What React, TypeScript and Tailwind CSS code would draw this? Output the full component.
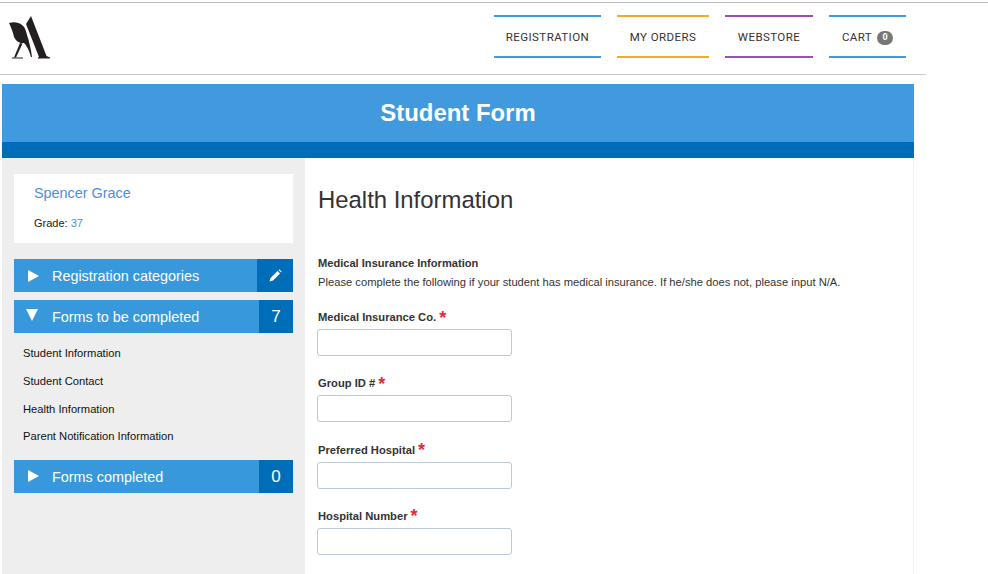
const nav = [
  { label: "REGISTRATION", w: "w-[107px]", c: "border-[#429ade]" },
  { label: "MY ORDERS", w: "w-[92px]", c: "border-[#f5a733]" },
  { label: "WEBSTORE", w: "w-[88px]", c: "border-[#9b4fb0]" },
];

const forms = ["Student Information", "Student Contact", "Health Information", "Parent Notification Information"];
const fields = ["Medical Insurance Co.", "Group ID #", "Preferred Hospital", "Hospital Number"];

function Logo() {
  return (
    <svg width="42" height="46" viewBox="0 0 42 46" className="block">
      <path d="M17 8 L22 0 L37.5 40 L41 41.5 V42.5 H29 V41.5 L30 41 Z" fill="#231f20" />
      <path d="M0 7 C5 5.5 10 6.5 13 9 C16 11 17 15 18 19 C20 25 22 33 23 41 L22 41 C20 34 18 30 15 27 C10 27.5 7 25 5 21 C4 16 2 11 0 7 Z" fill="#231f20" />
      <path d="M11 27 L13.5 27.5 L7 41.5 H5 Z" fill="#231f20" />
      <path d="M3 41.5 H14 V42.5 H3 Z" fill="#231f20" />
    </svg>
  );
}

function PencilGlyph() {
  return (
    <svg width="13" height="13" viewBox="0 0 13 13" className="block">
      <path d="M0.5 12.5 L1.5 9 L8.5 2 L11 4.5 L4 11.5 Z M9.5 1 L10.5 0.5 L12.5 2.5 L12 3.5 Z" fill="white" />
    </svg>
  );
}

function SideBar({ open, label, wide, children }: { open?: boolean; label: string; wide?: boolean; children: React.ReactNode }) {
  return (
    <div className="flex h-[33px] bg-[#3898dc] text-white">
      <div className={`flex w-[38px] shrink-0 items-center ${open ? "pl-[12px]" : "pl-[14px]"}`}>
        {open ? (
          <span className="mb-[3px] h-0 w-0 border-x-[6.5px] border-t-[12px] border-x-transparent border-t-white" />
        ) : (
          <span className="h-0 w-0 border-y-[6px] border-l-[11px] border-y-transparent border-l-white" />
        )}
      </div>
      <div className="flex-1 pt-px text-[14.4px] leading-[33px]">{label}</div>
      <div className={`flex shrink-0 items-center justify-center bg-[#006db8] ${wide ? "w-[36px]" : "w-[34px]"}`}>{children}</div>
    </div>
  );
}

export default function App() {
  return (
    <div className="h-[574px] w-[988px] overflow-hidden bg-white font-['Liberation_Sans',Arial,sans-serif]">
      <div className="mt-[2px] h-px bg-[#bbbbbb]" />
      <header className="flex h-[72px] w-[926px] items-start justify-between border-b border-[#cccccc]">
        <div className="pl-[9px] pt-[13px]">
          <Logo />
        </div>
        <nav className="mr-[20px] mt-[12px] flex gap-4 font-['Roboto',sans-serif] text-[11.5px] tracking-[0.42px] text-[#333333]">
          {nav.map((n) => (
            <div key={n.label} className={`flex h-[43px] items-center justify-center border-y-2 pt-[2px] ${n.w} ${n.c}`}>
              {n.label}
            </div>
          ))}
          <div className="flex h-[43px] w-[77px] items-center justify-center gap-[5px] border-y-2 border-[#429ade] pt-[2px]">
            CART
            <span className="flex h-[14px] w-4 items-center justify-center rounded-full bg-[#777777] text-[9px] font-bold leading-none tracking-normal text-white">
              0
            </span>
          </div>
        </nav>
      </header>

      <div className="ml-[2px] mt-[9px] w-[912px]">
        <div className="flex h-[58px] items-center justify-center bg-[#429ade] text-[23.9px] font-bold text-white">Student Form</div>
        <div className="h-4 bg-[#006db8]" />
        <div className="flex h-[416px]">
          <aside className="w-[303px] shrink-0 bg-[#eeeeee] px-3 pt-4">
            <div className="h-[69px] bg-white pl-5 pt-[11px]">
              <div className="text-[14.4px] leading-[17px] text-[#4a90d9]">Spencer Grace</div>
              <div className="mt-[15px] text-[11px] leading-[13px] text-[#222222]">
                Grade: <span className="text-[#4a90d9]">37</span>
              </div>
            </div>
            <div className="mt-4 flex flex-col gap-2">
              <SideBar label="Registration categories" wide>
                <PencilGlyph />
              </SideBar>
              <SideBar open label="Forms to be completed">
                <span className="pt-px text-[17px]">7</span>
              </SideBar>
            </div>
            <ul className="ml-[9px] mt-[7.3px] text-[11.2px] text-[#111111]">
              {forms.map((f) => (
                <li key={f} className="h-[27.7px] leading-[27.7px]">
                  {f}
                </li>
              ))}
            </ul>
            <div className="mt-[8.7px]">
              <SideBar label="Forms completed">
                <span className="pt-px text-[17px]">0</span>
              </SideBar>
            </div>
          </aside>

          <main className="flex-1 border-r border-[#eeeeee] pl-[13px] text-[#333333]">
            <h1 className="mt-[28px] text-[23.9px] font-normal leading-[28px]">Health Information</h1>
            <div className="mt-[43px] text-[11.1px] font-bold leading-[13px]">Medical Insurance Information</div>
            <p className="mt-[6px] text-[11.2px] leading-[13px]">
              Please complete the following if your student has medical insurance. If he/she does not, please input N/A.
            </p>
            <div className="mt-[20px] flex flex-col gap-[19.3px]">
              {fields.map((f) => (
                <div key={f}>
                  <label className="flex h-[17px] items-center text-[11.2px] font-bold">
                    {f}
                    <span className="ml-[3px] text-[18px] font-bold leading-none text-[#e02b3c]">*</span>
                  </label>
                  <input className="-ml-px mt-[3px] block h-[27px] w-[195px] rounded-[3px] border border-[#bcc8d8] bg-white" />
                </div>
              ))}
            </div>
          </main>
        </div>
      </div>
    </div>
  );
}
